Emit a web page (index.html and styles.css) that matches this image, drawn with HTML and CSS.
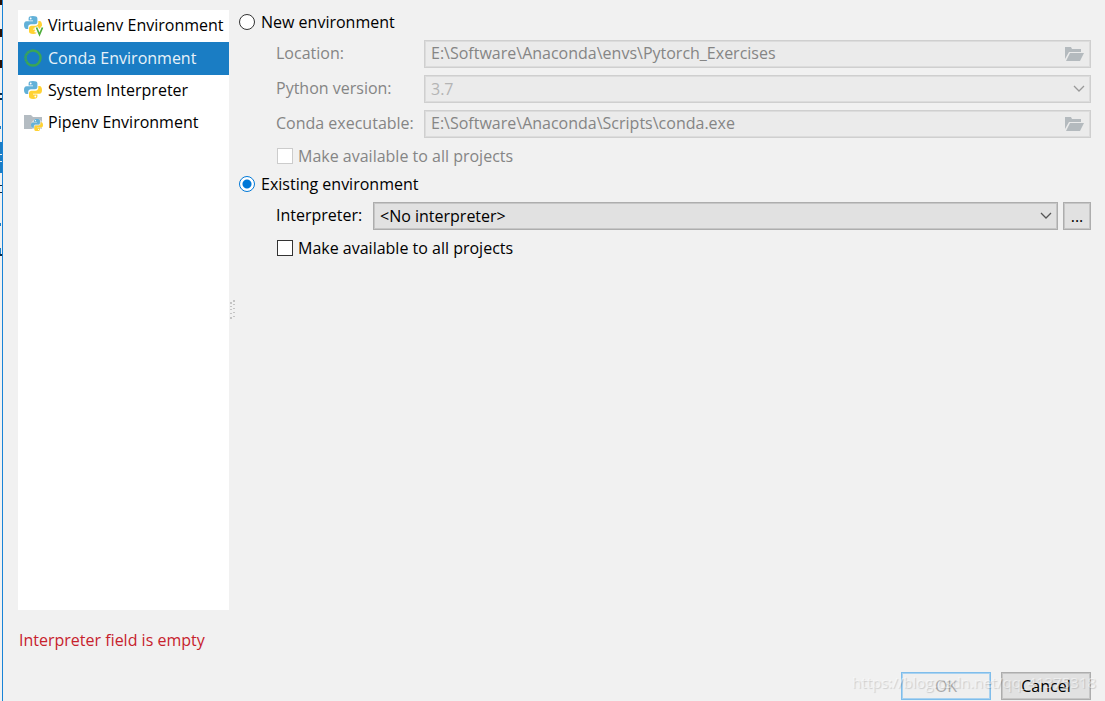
FILE: index.html
```html
<!DOCTYPE html>
<html lang="en">
<head>
    <meta charset="UTF-8">
    <meta name="viewport" content="width=device-width, initial-scale=1.0">
    <title>Add Python Interpreter</title>
    <link rel="stylesheet" href="styles.css">
</head>
<body>
    <svg width="0" height="0" class="defs" aria-hidden="true">
        <symbol id="python" viewBox="0 0 18 18">
            <path fill="#62b1d8" d="M8.800 0C6 0 4.600.8 4.600 2.400V4.500H9V5.200H2.600C.8 5.200 0 6.800 0 9s.9 4 2.500 4H4.200V10.900C4.200 9.300 5.500 8.300 7 8.300h4c1.400 0 2.400-1 2.400-2.300V2.400C13.400.8 11.700 0 8.800 0z"/>
            <path fill="#ffd233" d="M9.200 18c2.800 0 4.200-.8 4.200-2.400V13.500H9V12.800h6.400C17.200 12.800 18 11.200 18 9s-.9-4-2.500-4h-1.200v2.100c0 1.600-1.300 2.600-2.800 2.600h-4C6.100 9.700 5 10.700 5 12v3.600C5 17.200 6.300 18 9.200 18z"/>
            <circle cx="6.700" cy="2.500" r=".9" fill="#fff"/>
            <circle cx="11.300" cy="15.500" r=".9" fill="#fff"/>
        </symbol>
        <symbol id="folder" viewBox="0 0 19 15">
            <path fill="#b4babe" d="M0 0h6l1 2h9v3H4L0 12z"/>
            <path fill="#b4babe" d="M5 6h14l-4 8H1z"/>
        </symbol>
        <symbol id="chevron" viewBox="0 0 12 8">
            <path d="M1 1l5 5 5-5" fill="none" stroke="currentColor" stroke-width="1.300"/>
        </symbol>
    </svg>

    <!-- slice of the window behind the dialog -->
    <div class="backdrop">
        <svg width="2" height="260" viewBox="0 0 2 260" aria-hidden="true">
            <path fill="#2b1208" d="M0 0h2v5H0zM0 29h2v8H0zM0 60h2v8H0z"/>
            <path fill="#0d2a45" d="M0 93h2v2H0zM0 98h2v2H0zM0 185h2v1H0zM0 192h2v1H0zM0 254h2v2H0z"/>
            <path fill="#1c7dc4" d="M0 126h1v3H0zM0 142h2v12H0zM0 155h2v6H0zM0 162h2v11H0zM0 223h1v3H0zM0 248h1v6H0z"/>
        </svg>
    </div>

    <form class="dialog">
        <div class="content">
            <nav class="sidebar">
                <button type="button" class="item">
                    <svg width="19" height="18" viewBox="0 0 19 18" overflow="visible" aria-hidden="true">
                        <use href="#python" width="18" height="18"/>
                        <path d="M12 11l3.500 8L19 11" fill="none" stroke="#fff" stroke-width="4"/>
                        <path d="M12.500 11.500l3 7 3-7" fill="none" stroke="#4fae3c" stroke-width="1.700"/>
                    </svg>
                    Virtualenv Environment
                </button>
                <button type="button" class="item selected">
                    <svg width="19" height="18" viewBox="0 0 19 18" aria-hidden="true">
                        <circle cx="9" cy="9" r="7.500" fill="none" stroke="#3aa655" stroke-width="2.400"/>
                        <path d="M2.500 13A7.500 7.500 0 0 1 8 1.600" fill="none" stroke="#1a7dc4" stroke-width="1" stroke-dasharray="1 2"/>
                    </svg>
                    Conda Environment
                </button>
                <button type="button" class="item">
                    <svg width="19" height="18" viewBox="0 0 19 18" aria-hidden="true"><use href="#python" width="18" height="18"/></svg>
                    System Interpreter
                </button>
                <button type="button" class="item">
                    <svg width="19" height="18" viewBox="0 0 19 18" aria-hidden="true">
                        <path fill="#b4bcc2" d="M0 2h7l2 2h9v12H0z"/>
                        <circle cx="13" cy="12" r="6" fill="#fff" fill-opacity=".5"/>
                        <use href="#python" x="7" y="6" width="12" height="12"/>
                    </svg>
                    Pipenv Environment
                </button>
            </nav>

            <div class="splitter">
                <svg width="8" height="20" viewBox="0 0 8 20" aria-hidden="true">
                    <path fill="#c4c4c4" d="M1 2h2v2H1zM1 6h2v1H1zM1 9h2v1H1zM1 13h2v1H1zM1 17h2v2H1zM4 0h2v2H4zM4 4h2v1H4zM4 8h2v1H4zM4 12h2v1H4zM4 16h2v1H4z"/>
                </svg>
            </div>

            <div class="panel">
                <label class="choice"><input type="radio" name="env"> New environment</label>
                <div class="group disabled">
                    <div class="row">
                        <label for="location">Location:</label>
                        <div class="field">
                            <input type="text" id="location" value="E:\Software\Anaconda\envs\Pytorch_Exercises" disabled>
                            <button type="button" aria-label="Browse location" disabled><svg width="19" height="15"><use href="#folder"/></svg></button>
                        </div>
                    </div>
                    <div class="row">
                        <label for="version">Python version:</label>
                        <div class="field">
                            <select id="version" disabled><option>3.7</option></select>
                            <svg class="arrow" width="12" height="8"><use href="#chevron"/></svg>
                        </div>
                    </div>
                    <div class="row">
                        <label for="conda">Conda executable:</label>
                        <div class="field">
                            <input type="text" id="conda" value="E:\Software\Anaconda\Scripts\conda.exe" disabled>
                            <button type="button" aria-label="Browse conda executable" disabled><svg width="19" height="15"><use href="#folder"/></svg></button>
                        </div>
                    </div>
                    <label class="check"><input type="checkbox" disabled> Make available to all projects</label>
                </div>

                <label class="choice"><input type="radio" name="env" checked> Existing environment</label>
                <div class="group">
                    <div class="row existing">
                        <label for="interpreter">Interpreter:</label>
                        <div class="field">
                            <select id="interpreter"><option>&lt;No interpreter&gt;</option></select>
                            <svg class="arrow" width="12" height="8"><use href="#chevron"/></svg>
                        </div>
                        <button type="button" class="btn">...</button>
                    </div>
                    <label class="check"><input type="checkbox"> Make available to all projects</label>
                </div>
            </div>
        </div>

        <p class="error">Interpreter field is empty</p>

        <div class="actions">
            <button type="submit" class="btn ok" disabled>OK</button>
            <button type="button" class="btn">Cancel</button>
        </div>
    </form>
    <div class="watermark">https://blog.csdn.net/qq_41375318</div>
</body>
</html>
```
FILE: styles.css
```css
* {
    box-sizing: border-box;
}
body {
    margin: 0;
    display: flex;
    min-height: 100vh;
    background-color: #f1f1f1;
    color: #000;
    font-family: "Open Sans", sans-serif;
    font-size: 16px;
    line-height: 20px;
}
button, input, select {
    font: inherit;
    color: inherit;
    margin: 0;
}
svg {
    display: block;
    flex: none;
}
.defs {
    position: absolute;
}
.backdrop {
    width: 3px;
    border-right: 1px solid #1883d7;
}
.dialog {
    flex: 1;
    min-width: 0;
    display: flex;
    flex-direction: column;
    padding: 10px 14px 1px 15px;
}
.content {
    flex: 1;
    display: flex;
}

/* environment types */
.sidebar {
    width: 211px;
    background-color: #fff;
}
.item {
    display: flex;
    align-items: center;
    gap: 5px;
    width: 100%;
    height: 32px;
    padding: 0 6px 2px;
    border: none;
    background: none;
    text-align: left;
    white-space: nowrap;
}
.item.selected {
    height: 33px;
    background-color: #1a7dc4;
    color: #e8f2f9;
}
.splitter {
    display: flex;
    align-items: center;
    width: 10px;
}

/* right side */
.panel {
    flex: 1;
    min-width: 0;
}
.choice, .check {
    display: flex;
    align-items: center;
    gap: 6px;
    height: 24px;
}
.check {
    gap: 5px;
    height: 22px;
}
.group {
    display: flex;
    flex-direction: column;
    gap: 7px;
    padding: 6px 0 5px 37px;
}
.row {
    display: grid;
    grid-template-columns: 148px 1fr;
    align-items: center;
}
.row > label {
    padding-bottom: 2px;
}
.row.existing {
    grid-template-columns: 97px 1fr 28px;
}
.disabled {
    color: #858585;
}
.field {
    position: relative;
    display: flex;
    align-items: center;
    height: 28px;
    border: 1px solid #cfcfcf;
    box-shadow: inset 0 0 0 1px #dcdcdc;
    background-color: #ebebeb;
}
.field input, .field select {
    flex: 1;
    min-width: 0;
    height: 26px;
    padding: 0 6px 2px;
    border: none;
    background: none;
    appearance: none;
    outline: none;
    opacity: 1;
}
.field select {
    padding-bottom: 0;
}
.field select:disabled {
    color: #b4b4b4;
}
.field button {
    padding: 0 6px;
    border: none;
    background: none;
}
.arrow {
    position: absolute;
    right: 5px;
    color: #999;
    pointer-events: none;
}
.existing .field {
    border-color: #adadad;
    box-shadow: inset 0 0 0 1px #c6c6c6;
    background-color: #e1e1e1;
    margin-right: 5px;
}
.existing .arrow {
    color: #555;
}

input[type="radio"], input[type="checkbox"] {
    appearance: none;
    flex: none;
    width: 16px;
    height: 16px;
    border: 1px solid #333;
    background-color: #fff;
}
input[type="radio"] {
    border-radius: 50%;
}
input[type="radio"]:checked {
    border-color: #0078d7;
    background-image: radial-gradient(circle, #0078d7 4px, #fff 5px);
}
.check input {
    margin-left: 1px;
}
.check input:disabled {
    border-color: #ccc;
}

.btn {
    height: 28px;
    padding: 0;
    border: 1px solid #adadad;
    box-shadow: inset 0 0 0 1px #c6c6c6;
    background-color: #e1e1e1;
}
.error {
    margin: 20px 1px 22px;
    color: #c7222d;
}
.actions {
    display: flex;
    justify-content: flex-end;
    gap: 10px;
}
.actions .btn {
    width: 90px;
}
.actions .ok {
    border-color: #7fbdeb;
    box-shadow: inset 0 0 0 1px #a9d2f0;
    background-color: #efefef;
    color: #aaa;
}
.watermark {
    position: absolute;
    right: 9px;
    bottom: 9px;
    font-size: 15px;
    color: rgba(255, 255, 255, 0.5);
    text-shadow: 1px 1px 1px rgba(0, 0, 0, 0.15);
    pointer-events: none;
}
```
